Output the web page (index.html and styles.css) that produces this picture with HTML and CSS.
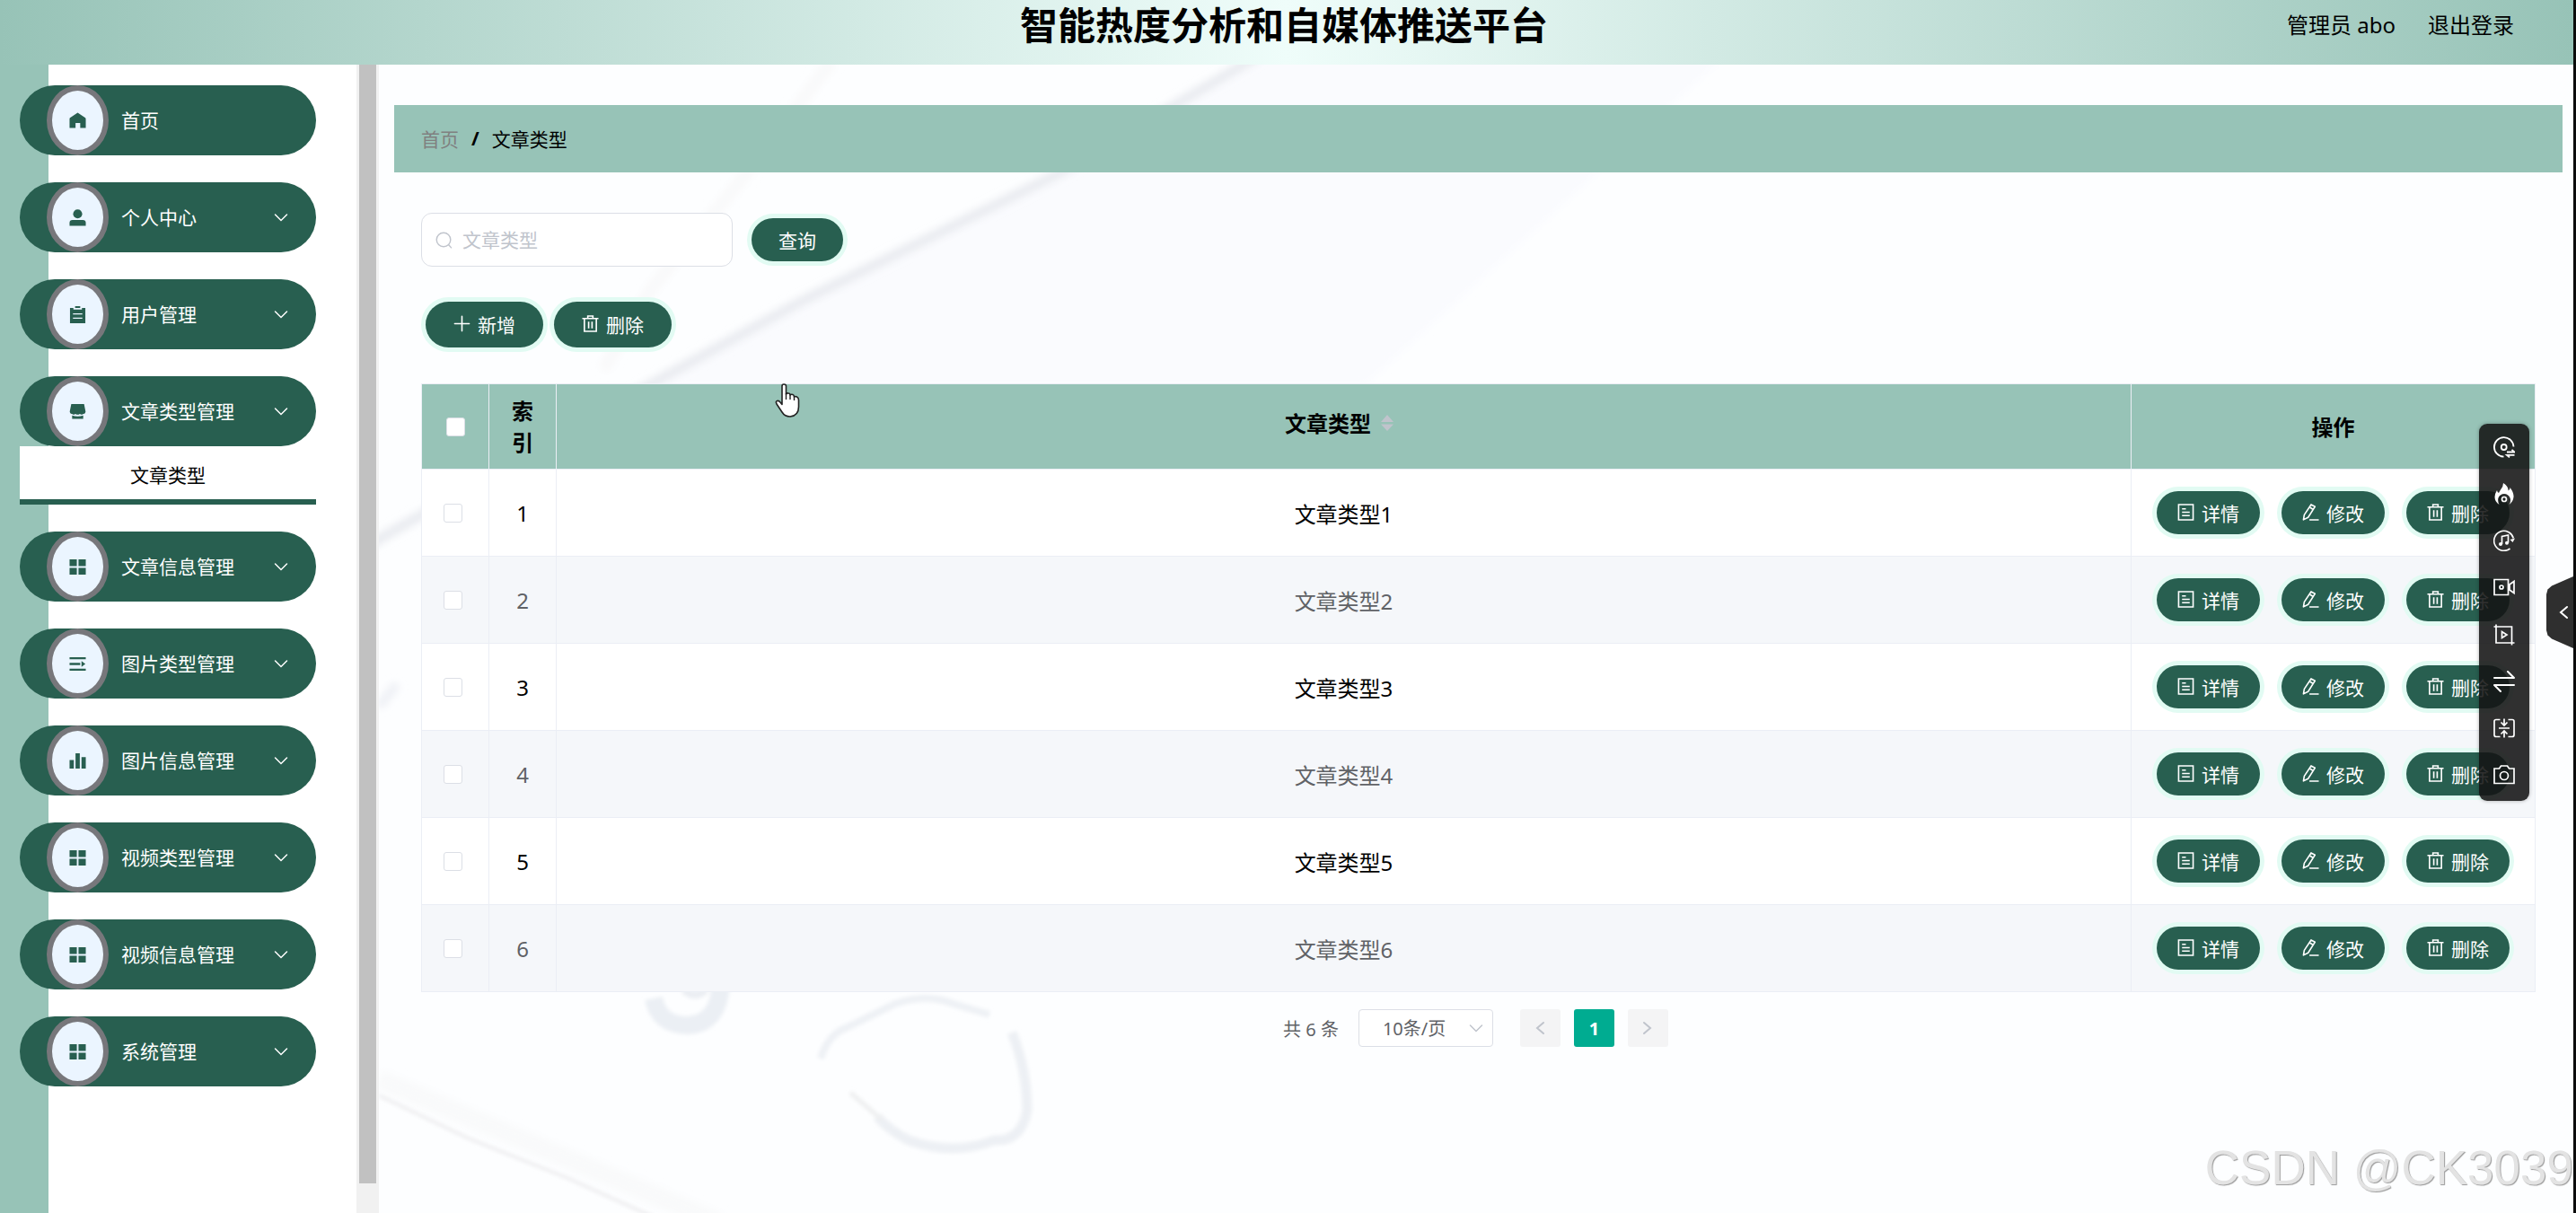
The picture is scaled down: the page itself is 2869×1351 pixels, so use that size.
FILE: index.html
```html
<!DOCTYPE html>
<html lang="zh-CN">
<head>
    <meta charset="UTF-8">
    <meta name="viewport" content="width=device-width, initial-scale=1.0">
    <title>智能热度分析和自媒体推送平台</title>
    <link rel="stylesheet" href="styles.css">
</head>
<body>

    <!-- Icon sprite -->
    <svg class="sprite" aria-hidden="true">
        <symbol id="i-home" viewBox="0 0 20 20"><path fill="currentColor" d="M10 0.5 L19 6.5 Q19.5 7 19.5 8 V18.5 H13 V12.5 H7.500 V18.5 H0.500 V8 Q0.500 7 1 6.500 Z"/></symbol>
        <symbol id="i-user" viewBox="0 0 20 20"><circle cx="10" cy="5.500" r="5.300" fill="currentColor"/><path fill="currentColor" d="M0.500 19.500 V16 Q0.500 12.500 4 12.500 H16 Q19.500 12.500 19.500 16 V19.500 Z"/></symbol>
        <symbol id="i-order" viewBox="0 0 20 20"><path fill="currentColor" d="M7 0 H13 V2 H7 Z M1 2 H5 V4 H15 V2 H19 V20 H1 Z"/><path stroke="#ebf5ff" stroke-width="1.300" d="M4.500 9 H15.500 M4.500 14 H15.500"/></symbol>
        <symbol id="i-shop" viewBox="0 0 20 20"><path fill="currentColor" d="M2.500 1 H17.500 L19.300 10 Q19 13 16.500 12.500 Q14.500 14.300 12.500 12.600 Q10 14.500 7.500 12.600 Q5.500 14.300 3.500 12.500 Q1 13 0.700 10 Z"/><path fill="currentColor" d="M3.500 14.500 Q10 16.500 16.500 14.500 V18.500 H3.500 Z"/></symbol>
        <symbol id="i-menu" viewBox="0 0 20 20"><path fill="currentColor" d="M0.500 1 H9 V9 H0.500 Z M11 1 H19.500 V9 H11 Z M0.500 11 H9 V19 H0.500 Z M11 11 H19.500 V19 H11 Z"/></symbol>
        <symbol id="i-unfold" viewBox="0 0 20 20"><path fill="currentColor" d="M0.500 2 H19.500 V4.500 H0.500 Z M0.500 8.800 H13 V11.200 H0.500 Z M0.500 15.500 H19.500 V18 H0.500 Z M14.500 6.500 L19 10 L14.500 13.500 Z"/></symbol>
        <symbol id="i-data" viewBox="0 0 20 20"><path fill="currentColor" d="M0.500 9 H5.500 V19 H0.500 Z M7.500 1 H12.500 V19 H7.500 Z M14.500 5.500 H19.500 V19 H14.500 Z"/></symbol>
        <symbol id="i-down" viewBox="0 0 16 16"><path fill="none" stroke="currentColor" stroke-width="1.500" stroke-linecap="round" d="M1.500 5 L8 11.500 L14.500 5"/></symbol>
        <symbol id="i-left" viewBox="0 0 16 16"><path fill="none" stroke="currentColor" stroke-width="2" stroke-linecap="round" d="M12 2 L5 8 L12 14"/></symbol>
        <symbol id="i-right" viewBox="0 0 16 16"><path fill="none" stroke="currentColor" stroke-width="2" stroke-linecap="round" d="M4 2 L11 8 L4 14"/></symbol>
        <symbol id="i-search" viewBox="0 0 20 20"><circle cx="9.500" cy="9.500" r="8.200" fill="none" stroke="currentColor" stroke-width="1.500"/><path stroke="currentColor" stroke-width="1.500" stroke-linecap="round" d="M15.500 15.500 L18.500 18.800"/></symbol>
        <symbol id="i-plus" viewBox="0 0 20 20"><path stroke="currentColor" stroke-width="1.700" stroke-linecap="round" d="M10 1.500 V18.500 M1.500 10 H18.500"/></symbol>
        <symbol id="i-delete" viewBox="0 0 20 20"><path fill="none" stroke="currentColor" stroke-width="1.700" d="M0.500 4 H19.500 M3 4 V19 H17 V4 M7 3.500 V1 H13 V3.500 M8 7.500 V15.500 M12 7.500 V15.500"/></symbol>
        <symbol id="i-doc" viewBox="0 0 20 20"><path fill="none" stroke="currentColor" stroke-width="1.700" d="M1.500 1 H18.500 V19 H1.500 Z M5.500 6 H10 M5.500 10 H14.500 M5.500 14 H14.500"/></symbol>
        <symbol id="i-edit" viewBox="0 0 20 20"><path fill="none" stroke="currentColor" stroke-width="1.700" stroke-linejoin="round" d="M10.500 1 L15 3.500 L7 16 L1.500 18.800 L2.500 13 Z M8.500 4 L13 6.800 M8.500 19 H19.500"/></symbol>
        <symbol id="i-disc" viewBox="0 0 24 24"><path fill="none" stroke="currentColor" stroke-width="1.800" d="M22.500 11.500 A10.800 10.800 0 1 0 11.500 22.700 M15 17.500 H23.500 L20.500 14.800 M23.500 20.800 H15 L18 23.400"/><circle cx="11.700" cy="12" r="3" fill="none" stroke="currentColor" stroke-width="1.800"/></symbol>
        <symbol id="i-fire" viewBox="0 0 24 24"><path fill="currentColor" d="M11 0 Q17 4 16.500 8.500 Q18.500 8 18.500 5 Q23 11 22.500 15.500 Q22 21 17.500 24 Q20 20 18.500 16.500 Q16.500 12 12 12 Q7.500 12 5.500 16.500 Q4.500 20.500 6.500 24 Q1.500 21 1.500 15.500 Q1.500 12 4 8 Q4.500 11 6 11 Q6.500 9.500 8 7.500 Q11 4 11 0 Z"/><circle cx="12" cy="18" r="2.500" fill="none" stroke="currentColor" stroke-width="1.700"/></symbol>
        <symbol id="i-music" viewBox="0 0 24 24"><path fill="none" stroke="currentColor" stroke-width="1.600" d="M18.500 21 A11 11 0 1 1 22.300 9.500"/><path fill="currentColor" d="M18.500 11 L24 9.500 L21.500 14 Z"/><path fill="none" stroke="currentColor" stroke-width="1.700" d="M9.500 16 V7.500 L16.500 6 V14.500"/><circle cx="8" cy="16" r="2" fill="currentColor"/><circle cx="15" cy="14.700" r="2" fill="currentColor"/></symbol>
        <symbol id="i-video" viewBox="0 0 24 24"><path fill="none" stroke="currentColor" stroke-width="1.700" d="M1 3.500 H16.500 V20.500 H1 Z M23 5.500 V18.500 L18 15 V9 Z"/><circle cx="9" cy="12" r="2" fill="none" stroke="currentColor" stroke-width="1.700"/></symbol>
        <symbol id="i-crop" viewBox="0 0 24 24"><path fill="none" stroke="currentColor" stroke-width="1.700" d="M3 0.500 V21 H23.500 M0.500 3 H20.500 V23.500 M9.500 8.500 V15.500 L15 12 Z"/></symbol>
        <symbol id="i-swap" viewBox="0 0 24 24"><path fill="none" stroke="currentColor" stroke-width="2" stroke-linecap="round" stroke-linejoin="round" d="M1 8 H23 L16 1 M23 16 H1 L8 23"/></symbol>
        <symbol id="i-compress" viewBox="0 0 24 24"><path fill="none" stroke="currentColor" stroke-width="1.700" d="M7.500 2.500 H3 Q1 2.500 1 4.500 V19.500 Q1 21.500 3 21.500 H7.500 M16.500 2.500 H21 Q23 2.500 23 4.500 V19.500 Q23 21.500 21 21.500 H16.500 M6 12 H18 M12 1.500 V8.500 M8.500 5.500 L12 9 L15.500 5.500 M12 22.500 V15.500 M8.500 18.500 L12 15 L15.500 18.500"/></symbol>
        <symbol id="i-camera" viewBox="0 0 24 24"><path fill="none" stroke="currentColor" stroke-width="1.700" d="M1 5 H6.500 L8.500 2 H15.500 L17.500 5 H23 V21.500 H1 Z"/><circle cx="12" cy="13" r="4.500" fill="none" stroke="currentColor" stroke-width="1.700"/></symbol>
    </svg>

    <header class="header">
        <h1>智能热度分析和自媒体推送平台</h1>
        <div class="header-user">
            <span>管理员 abo</span>
            <a href="#">退出登录</a>
        </div>
    </header>

    <div class="layout">
        <aside class="sidebar">
            <nav>
                <ul class="menu" id="menu"></ul>
            </nav>
            <div class="scrollbar"><div class="scrollbar-thumb"></div></div>
        </aside>

        <main class="main">
            <!-- Faint marker and clip drawing behind the content -->
            <svg class="backdrop" viewBox="0 0 2444 1279" preserveAspectRatio="xMinYMin slice" aria-hidden="true">
                <defs>
                    <filter id="soft" x="-10%" y="-10%" width="120%" height="120%"><feGaussianBlur stdDeviation="4"/></filter>
                    <filter id="softer" x="-10%" y="-10%" width="120%" height="120%"><feGaussianBlur stdDeviation="2"/></filter>
                </defs>
                <path fill="#fafbfe" d="M310 356 L474 266 L756 126 L990 -10 H1500 L1100 356 Z" filter="url(#soft)"/>
                <g fill="none" filter="url(#soft)">
                    <path stroke="#e9ebf0" stroke-width="11" d="M-20 540 L310 352 L474 262 L756 122 L980 -10"/>
                    <path stroke="#f9f9fa" stroke-width="14" d="M505 -5 L408 123 L303 250 L250 340"/>
                    <path stroke="#f9fafb" stroke-width="22" d="M0 1130 L380 1290"/>
                    <path stroke="#eef0f5" stroke-width="10" d="M0 715 L20 690"/>
                </g>
                <g fill="none" filter="url(#softer)">
                    <path stroke="#ebeff4" stroke-width="20" d="M306 1040 Q312 1070 344 1070 Q380 1068 381 1020"/>
                    <path stroke="#ebeef3" stroke-width="9" d="M340 1030 Q352 1042 364 1030"/>
                    <path stroke="#eeeef0" stroke-width="4" d="M0 1148 L100 1196 L210 1240 L320 1290"/>
                    <path stroke="#eef1f5" stroke-width="8" d="M492 1107 Q500 1080 522 1072 L575 1046 Q610 1034 640 1046 L680 1058"/>
                    <path stroke="#edf0f4" stroke-width="11" d="M705 1078 Q722 1120 722 1165 Q715 1200 685 1198 Q640 1216 590 1198 Q570 1188 555 1172"/>
                    <path stroke="#eeeff0" stroke-width="5" d="M525 1145 L560 1175"/>
                </g>
            </svg>

            <div class="breadcrumb">
                <a href="#">首页</a>
                <b>/</b>
                <span>文章类型</span>
            </div>

            <div class="content">
                <form class="search" onsubmit="return false">
                    <div class="search-box">
                        <svg class="icon"><use href="#i-search"/></svg>
                        <input type="text" aria-label="文章类型" placeholder="文章类型">
                    </div>
                    <button class="btn">查询</button>
                </form>

                <div class="actions">
                    <button class="btn btn-lg"><svg class="icon"><use href="#i-plus"/></svg>新增</button>
                    <button class="btn btn-lg"><svg class="icon"><use href="#i-delete"/></svg>删除</button>
                </div>

                <table class="table">
                    <colgroup>
                        <col class="col-small">
                        <col class="col-small">
                        <col>
                        <col class="col-actions">
                    </colgroup>
                    <thead>
                        <tr>
                            <th><input type="checkbox" class="check-all" aria-label="全选"></th>
                            <th>索引</th>
                            <th>
                                <div class="sortable">文章类型
                                    <svg class="caret" viewBox="0 0 14 18"><path d="M7 0 L14 8 H0 Z M0 10.500 H14 L7 18 Z"/></svg>
                                </div>
                            </th>
                            <th>操作</th>
                        </tr>
                    </thead>
                    <tbody id="rows"></tbody>
                </table>

                <div class="pagination">
                    <span class="total">共 6 条</span>
                    <div class="page-size">
                        <select aria-label="每页条数">
                            <option>10条/页</option>
                            <option>20条/页</option>
                        </select>
                        <svg><use href="#i-down"/></svg>
                    </div>
                    <button class="page" aria-label="上一页" disabled><svg><use href="#i-left"/></svg></button>
                    <button class="page active">1</button>
                    <button class="page" aria-label="下一页" disabled><svg><use href="#i-right"/></svg></button>
                </div>
            </div>
        </main>
    </div>

    <!-- Floating recorder tools -->
    <div class="tools" id="tools"></div>
    <button class="tools-handle" aria-label="收起"><svg><use href="#i-left"/></svg></button>

    <svg class="pointer" viewBox="0 0 28 38" aria-hidden="true">
        <path fill="#fff" stroke="#222" stroke-width="1.600" stroke-linejoin="round" d="M8 3 Q8 1 10 1 Q12.500 1 12.500 3 V12 Q13 10.500 15 11 Q17 11.200 17 13 Q18 11.800 20 12.500 Q21.500 13 21.500 15 Q23 14 24.500 15 Q26.500 16 26.500 18.500 V26 Q26.500 36 17 37 Q11 37 8 32 L2 23 Q0.500 20 2.500 19.500 Q4.500 19 6 21 L8 23.500 Z"/>
        <path fill="none" stroke="#222" stroke-width="1.400" d="M12.500 11 V18 M17 13 V18 M21.500 14.500 V19"/>
    </svg>

    <div class="watermark">CSDN @CK3039</div>

    <script>
        const menuItems = [
            { name: "首页", icon: "home" },
            { name: "个人中心", icon: "user", children: [] },
            { name: "用户管理", icon: "order", children: [] },
            { name: "文章类型管理", icon: "shop", children: ["文章类型"] },
            { name: "文章信息管理", icon: "menu", children: [] },
            { name: "图片类型管理", icon: "unfold", children: [] },
            { name: "图片信息管理", icon: "data", children: [] },
            { name: "视频类型管理", icon: "menu", children: [] },
            { name: "视频信息管理", icon: "menu", children: [] },
            { name: "系统管理", icon: "menu", children: [] }
        ];

        const articleTypes = ["文章类型1", "文章类型2", "文章类型3", "文章类型4", "文章类型5", "文章类型6"];

        const toolItems = [
            ["disc", "格式转换"], ["fire", "刻录"], ["music", "音频转换"], ["video", "录屏"],
            ["crop", "裁剪"], ["swap", "转换"], ["compress", "压缩"], ["camera", "截图"]
        ];

        function icon(name, cls = "icon") {
            return `<svg class="${cls}"><use href="#i-${name}"/></svg>`;
        }

        // Side menu
        document.getElementById("menu").innerHTML = menuItems.map(item => `
            <li>
                <a href="#" class="menu-item">
                    <span class="menu-icon">${icon(item.icon)}</span>
                    <span class="menu-name">${item.name}</span>
                    ${item.children ? icon("down", "menu-arrow") : ""}
                </a>
                ${(item.children || []).map(child => `<a href="#" class="submenu-item">${child}</a>`).join("")}
            </li>
        `).join("");

        // Table rows
        document.getElementById("rows").innerHTML = articleTypes.map((type, i) => `
            <tr>
                <td><input type="checkbox" aria-label="选择${type}"></td>
                <td>${i + 1}</td>
                <td>${type}</td>
                <td>
                    <div class="row-actions">
                        <button class="btn">${icon("doc")}详情</button>
                        <button class="btn">${icon("edit")}修改</button>
                        <button class="btn">${icon("delete")}删除</button>
                    </div>
                </td>
            </tr>
        `).join("");

        document.getElementById("tools").innerHTML = toolItems.map(([name, label]) =>
            `<button aria-label="${label}">${icon(name, "tool-icon")}</button>`
        ).join("");

        // Select / clear every row
        document.querySelector(".check-all").addEventListener("change", function() {
            document.querySelectorAll("#rows input").forEach(box => box.checked = this.checked);
        });
    </script>

</body>
</html>
```
FILE: styles.css
```css
* {
    box-sizing: border-box;
}

body {
    margin: 0;
    min-height: 100vh;
    display: flex;
    flex-direction: column;
    position: relative;
    overflow: hidden;
    border-right: 3px solid #0c0c0c;
    background: #fff;
    color: #000;
    font-family: "Noto Sans", "Noto Sans CJK SC", sans-serif;
    font-size: 21px;
}

a {
    color: inherit;
    text-decoration: none;
}

button, input, select {
    font-family: inherit;
    font-size: inherit;
}

button {
    border: none;
    cursor: pointer;
}

.sprite {
    display: none;
}

.icon {
    width: 19px;
    height: 19px;
    flex: none;
}

/* Header */
.header {
    display: grid;
    grid-template-columns: 1fr auto 1fr;
    height: 72px;
    padding-right: 66px;
    padding-left: 60px;
    line-height: 56px;
    background: linear-gradient(to right, #97c3b7, #effdfa, #97c3b7);
}

.header h1 {
    grid-column: 2;
    margin: 0;
    font-size: 42px;
    font-weight: 700;
}

.header-user {
    display: flex;
    justify-content: flex-end;
    gap: 36px;
    font-size: 24px;
}

.layout {
    display: flex;
    flex: 1;
}

/* Sidebar */
.sidebar {
    display: flex;
    justify-content: space-between;
    flex: none;
    width: 422px;
    background: linear-gradient(to right, #97c3b7 54px, #fff 54px);
}

.menu {
    list-style: none;
    display: flex;
    flex-direction: column;
    gap: 30px;
    width: 330px;
    margin: 23px 0 0 22px;
    padding: 0;
}

.menu-item {
    display: flex;
    align-items: center;
    height: 78px;
    padding: 0 31px 0 30px;
    border-radius: 39px;
    background: #285f50;
    color: #fff;
}

.menu-icon {
    display: flex;
    align-items: center;
    justify-content: center;
    width: 69px;
    height: 78px;
    border: 6px solid #77777b;
    border-radius: 50%;
    background: #ebf5ff;
    color: #285f50;
}

.menu-name {
    flex: 1;
    margin-left: 14px;
    padding-bottom: 3px;
}

.menu-arrow {
    width: 16px;
    height: 16px;
}

.submenu-item {
    display: block;
    height: 65px;
    line-height: 64px;
    border-bottom: 6px solid #285f50;
    background: #fff;
    text-align: center;
}

.scrollbar {
    width: 25px;
    padding: 0 3px;
    background: #f1f1f1;
}

.scrollbar-thumb {
    height: 97.4%;
    background: #c1c1c1;
}

/* Main area */
.main {
    position: relative;
    z-index: 0;
    flex: 1;
    min-width: 0;
    padding: 45px 12px 0 17px;
    background: #fdfeff;
}

.backdrop {
    position: absolute;
    inset: 0;
    z-index: -1;
    width: 100%;
    height: 100%;
}

.breadcrumb {
    display: flex;
    align-items: center;
    gap: 14px;
    height: 75px;
    padding: 0 30px 2px;
    background: #97c3b7;
}

.breadcrumb a {
    color: #808080;
}

.content {
    padding: 45px 30px 0;
}

.search {
    display: flex;
    align-items: center;
    gap: 21px;
}

.search-box {
    display: flex;
    align-items: center;
    gap: 11px;
    width: 347px;
    height: 60px;
    padding: 0 15px;
    border: 1px solid #dcdfe6;
    border-radius: 12px;
    background: #fff;
    color: #c0c4cc;
}

.search-box input {
    flex: 1;
    min-width: 0;
    padding: 0;
    border: none;
    outline: none;
    background: none;
    color: #606266;
}

.search-box input::placeholder {
    color: #c0c4cc;
}

.btn {
    display: flex;
    align-items: center;
    justify-content: center;
    gap: 8px;
    height: 48px;
    padding: 0 23px 1px;
    border-radius: 26px;
    background: #285f50;
    box-shadow: 0 0 0 5px #e2fbf3;
    color: #fff;
}

.search .btn,
.btn-lg {
    padding: 0 30px 1px;
}

.btn-lg {
    height: 51px;
    padding: 0 31px 2px;
}

.actions {
    display: flex;
    gap: 12px;
    margin: 39px 5px 40px;
}

/* Table */
.table {
    width: 100%;
    table-layout: fixed;
    border-collapse: collapse;
    background: #fff;
    font-size: 24px;
}

.col-small {
    width: 75px;
}

.col-actions {
    width: 450px;
}

.table th,
.table td {
    height: 97px;
    padding: 0;
    border: 1px solid #ebeef5;
    text-align: center;
}

.table th {
    height: 95px;
    padding: 0 15px;
    background: #97c3b7;
    line-height: 35px;
    font-weight: 700;
}

.table tbody tr:nth-child(even) {
    background: #f5f7fa;
    color: #606266;
}

.table input {
    appearance: none;
    display: block;
    width: 21px;
    height: 21px;
    margin: 0 auto;
    border: 1px solid #dcdfe6;
    border-radius: 3px;
    background: #fff;
}

.table td input {
    margin-left: 24px;
}

.table input:checked {
    background: #285f50;
}

.sortable {
    display: flex;
    align-items: center;
    justify-content: center;
    gap: 11px;
    padding-right: 10px;
    padding-bottom: 8px;
}

.caret {
    width: 14px;
    height: 18px;
    fill: #c0c4cc;
}

.row-actions {
    display: flex;
    justify-content: center;
    gap: 24px;
    font-size: 21px;
}

/* Pagination */
.pagination {
    display: flex;
    align-items: center;
    justify-content: center;
    gap: 15px;
    margin-top: 19px;
    padding-right: 6px;
    color: #606266;
    font-size: 20px;
}

.total {
    margin-right: 7px;
}

.page-size {
    position: relative;
    margin-right: 15px;
}

.page-size select {
    appearance: none;
    display: block;
    width: 150px;
    height: 42px;
    padding: 0 26px;
    border: 1px solid #dcdfe6;
    border-radius: 4px;
    background: #fff;
    color: #606266;
}

.page-size svg {
    position: absolute;
    top: 13px;
    right: 11px;
    width: 16px;
    height: 16px;
    color: #c0c4cc;
    pointer-events: none;
}

.page {
    display: flex;
    align-items: center;
    justify-content: center;
    width: 45px;
    height: 42px;
    padding: 0;
    border-radius: 3px;
    background: #f4f4f5;
    color: #c0c4cc;
}

.page svg {
    width: 16px;
    height: 16px;
}

.page.active {
    background: #00ac91;
    color: #fff;
    font-weight: 700;
}

/* Floating tools */
.tools {
    position: absolute;
    top: 472px;
    right: 49px;
    display: flex;
    flex-direction: column;
    justify-content: space-around;
    align-items: center;
    width: 56px;
    height: 420px;
    padding-bottom: 3px;
    border-radius: 9px;
    background: rgba(19, 19, 19, 0.88);
    box-shadow: 0 0 4px rgba(0, 0, 0, 0.3);
}

.tools button {
    display: flex;
    padding: 0;
    background: none;
    color: #fff;
}

.tool-icon {
    width: 24px;
    height: 24px;
}

.tools-handle {
    position: absolute;
    top: 642px;
    right: 0;
    display: flex;
    align-items: center;
    justify-content: flex-end;
    width: 30px;
    height: 80px;
    padding: 0 3px;
    background: #2f2f2f;
    color: #fff;
    clip-path: polygon(100% 0, 20% 13%, 5% 18%, 0 25%, 0 75%, 5% 82%, 20% 87%, 100% 100%);
}

.tools-handle svg {
    width: 16px;
    height: 18px;
}

.pointer {
    position: absolute;
    top: 427px;
    left: 863px;
    width: 28px;
    height: 38px;
}

.watermark {
    position: absolute;
    right: 0;
    bottom: 20px;
    color: #e3e3e3;
    font-family: "Liberation Sans", Arial, sans-serif;
    font-size: 53px;
    line-height: 60px;
    text-shadow: 1px 1px 1px #999;
}
```
